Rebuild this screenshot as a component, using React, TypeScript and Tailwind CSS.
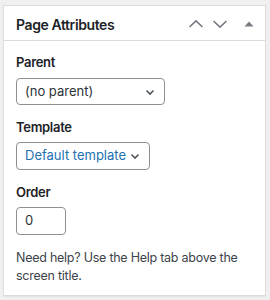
import React from "react";

export default function App() {
  return (
    <div className="w-[270px] h-[300px] bg-[#f0f0f1] pt-[5px] pl-[3px]" style={{ fontFamily: "Inter, 'Noto Sans', sans-serif" }}>
      <div className="w-[263px] h-[291px] bg-white border border-[#dcdcde] shadow-[0_1px_1px_rgba(0,0,0,0.04)] flex flex-col">
        <div className="h-[35px] border-b border-[#dcdcde] flex items-center pl-[12px] pr-[11px] pt-[2px]">
          <div className="text-[14px] font-semibold tracking-[-0.4px] text-[#1d2327] flex-1">Page Attributes</div>
          <div className="flex items-center">
            <svg width="16" height="10" viewBox="0 0 16 10" className="mr-[8px]">
              <path d="M1.5 8 L8 2 L14.5 8" fill="none" stroke="#787c82" strokeWidth="1.7" />
            </svg>
            <svg width="16" height="10" viewBox="0 0 16 10" className="mr-[16px]">
              <path d="M1.5 2 L8 8 L14.5 2" fill="none" stroke="#787c82" strokeWidth="1.7" />
            </svg>
            <svg width="10" height="8" viewBox="0 0 10 8">
              <path d="M0.5 6.5 L5 1.5 L9.5 6.5 Z" fill="#787c82" />
            </svg>
          </div>
        </div>
        <div className="px-[12px] pt-[12px] flex flex-col text-[13px] text-[#1d2327]">
          <div className="font-semibold text-[13px] tracking-[-0.3px] leading-[18px]">Parent</div>
          <div className="mt-[7px] w-[149px] h-[27px] border border-[#8c8f94] rounded-[4px] flex items-center pl-[8px] pr-[8px]">
            <span className="flex-1 text-[13px] text-[#2c3338]">(no parent)</span>
            <svg width="12" height="12" viewBox="0 0 12 12">
              <path d="M2.5 4.5 L6 8 L9.5 4.5" fill="none" stroke="#50575e" strokeWidth="1.6" />
            </svg>
          </div>
          <div className="mt-[13px] font-semibold text-[13px] tracking-[-0.3px] leading-[18px]">Template</div>
          <div className="mt-[6px] w-[134px] h-[28px] border border-[#8c8f94] rounded-[4px] flex items-center pl-[8px] pr-[8px]">
            <span className="flex-1 text-[13px] text-[#2271b1] whitespace-nowrap">Default template</span>
            <svg width="12" height="12" viewBox="0 0 12 12">
              <path d="M2.5 4.5 L6 8 L9.5 4.5" fill="none" stroke="#50575e" strokeWidth="1.6" />
            </svg>
          </div>
          <div className="mt-[13px] font-semibold text-[13px] tracking-[-0.3px] leading-[18px]">Order</div>
          <div className="mt-[6px] w-[50px] h-[28px] border border-[#8c8f94] rounded-[4px] flex items-center pl-[8px] text-[13px] text-[#2c3338]">0</div>
          <p className="mt-[14px] text-[12.5px] tracking-[-0.25px] leading-[18px] text-[#3c434a]">Need help? Use the Help tab above the screen title.</p>
        </div>
      </div>
    </div>
  );
}
